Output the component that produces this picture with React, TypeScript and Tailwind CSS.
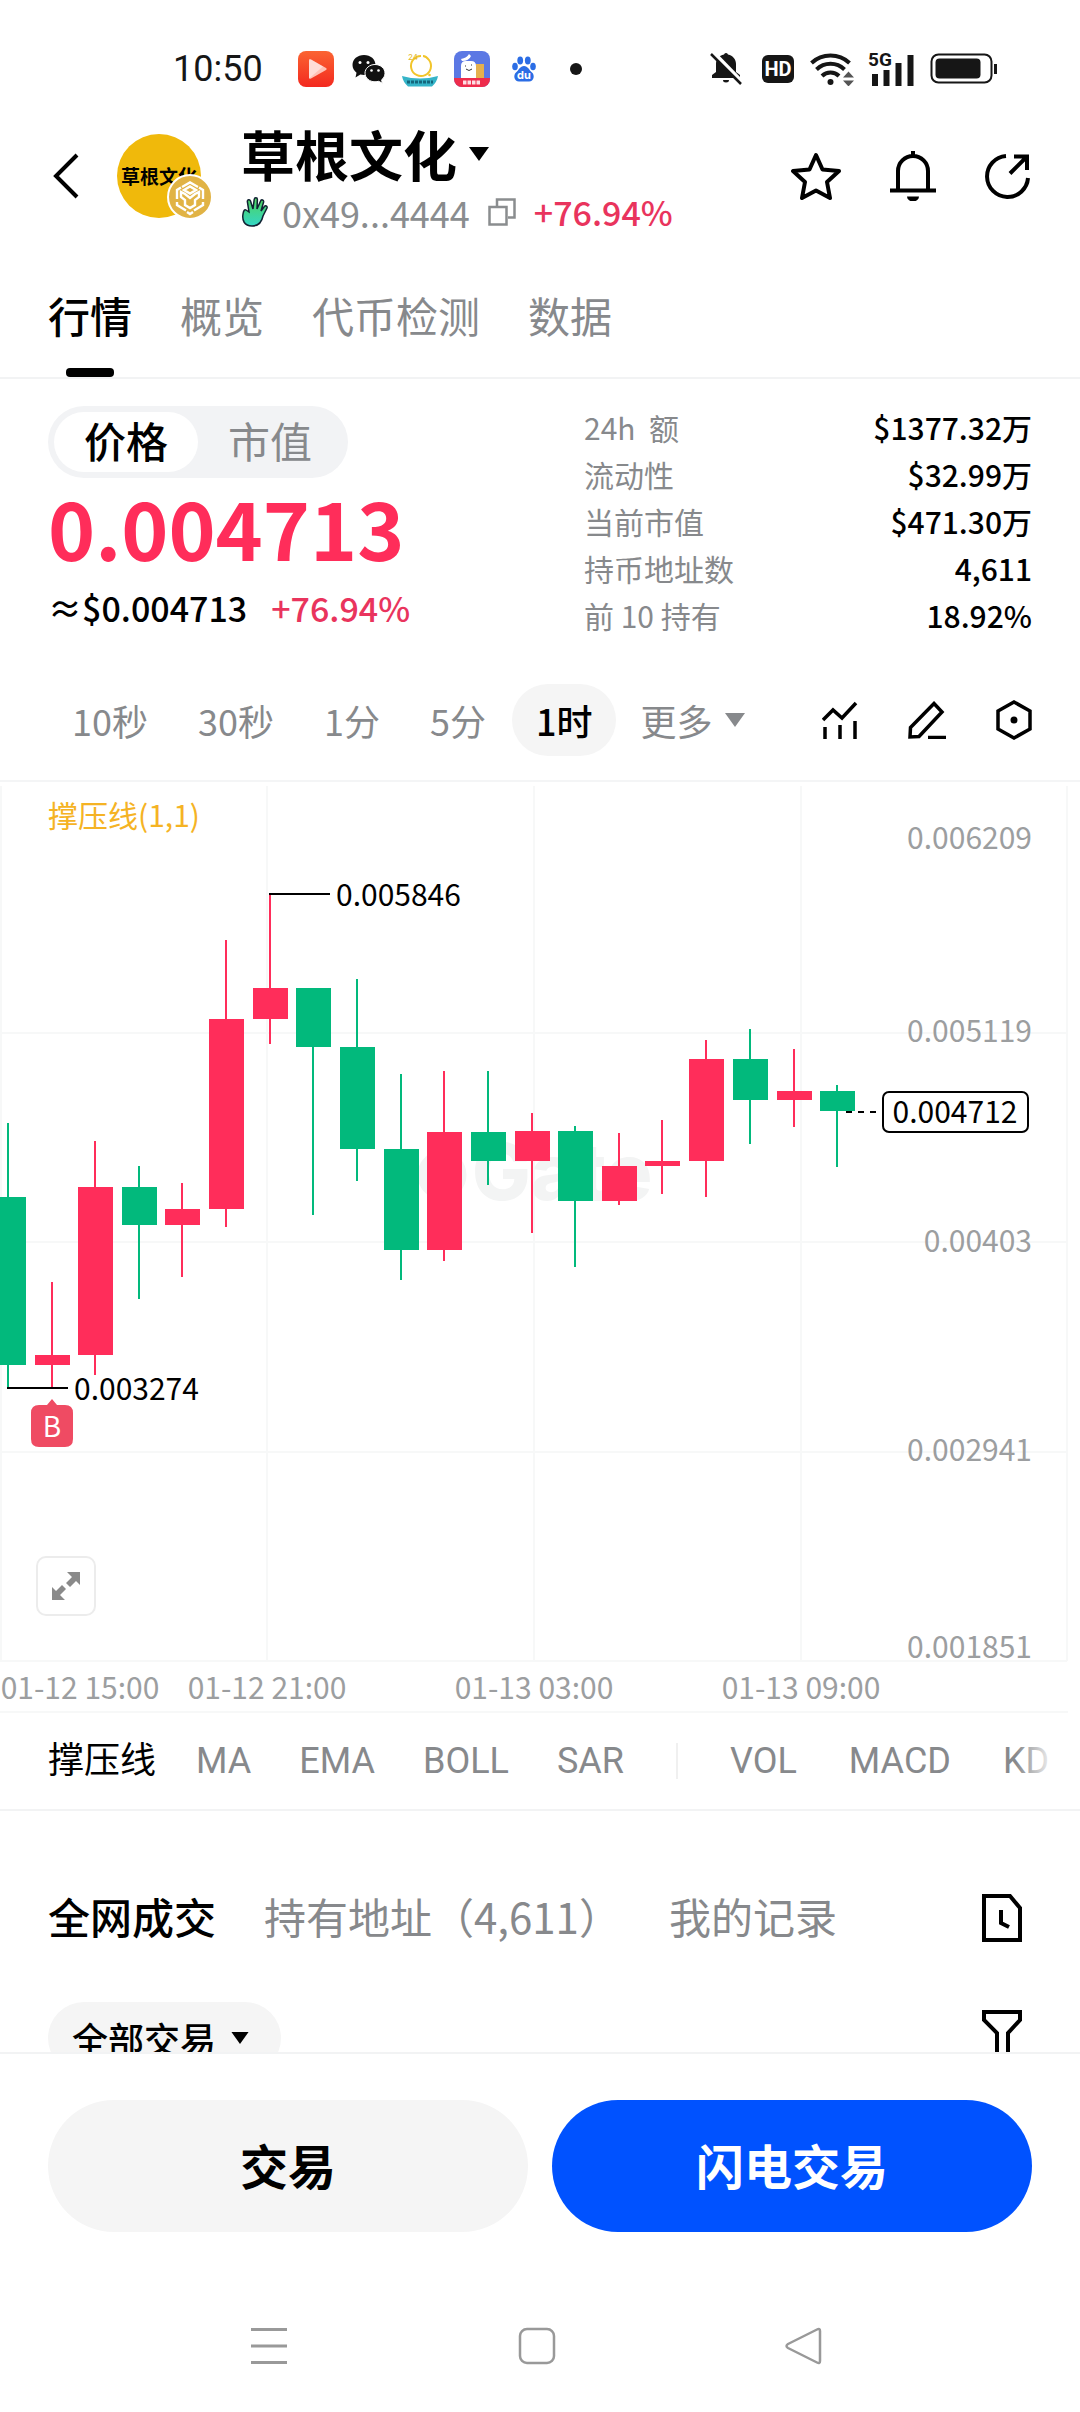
import type { ReactNode } from "react";

const UP = "#ff2d5a";
const DOWN = "#02b97c";

// x, high, low, body top, body bottom, colour
const candles: [number, number, number, number, number, string][] = [
  [8, 341, 605, 415, 583, DOWN],
  [52, 500, 605, 573, 583, UP],
  [95, 359, 593, 405, 573, UP],
  [139, 384, 517, 405, 443, DOWN],
  [182, 401, 495, 427, 443, UP],
  [226, 158, 445, 237, 427, UP],
  [270, 112, 262, 206, 237, UP],
  [313, 206, 433, 206, 265, DOWN],
  [357, 197, 399, 265, 367, DOWN],
  [401, 292, 498, 367, 468, DOWN],
  [444, 289, 479, 350, 468, UP],
  [488, 289, 403, 350, 379, DOWN],
  [532, 331, 451, 349, 379, UP],
  [575, 344, 485, 349, 419, DOWN],
  [619, 351, 423, 384, 419, UP],
  [662, 338, 412, 379, 384, UP],
  [706, 258, 415, 277, 379, UP],
  [750, 247, 362, 277, 318, DOWN],
  [794, 267, 345, 309, 318, UP],
  [837, 303, 385, 309, 329, DOWN],
];

const priceTicks = [
  { label: "0.006209", y: 56 },
  { label: "0.005119", y: 249 },
  { label: "0.00403", y: 459 },
  { label: "0.002941", y: 668 },
  { label: "0.001851", y: 865 },
];

const timeTicks = [
  { label: "01-12 15:00", x: 80 },
  { label: "01-12 21:00", x: 267 },
  { label: "01-13 03:00", x: 534 },
  { label: "01-13 09:00", x: 801 },
];

const stats = [
  { label: "24h  额", value: "$1377.32万" },
  { label: "流动性", value: "$32.99万" },
  { label: "当前市值", value: "$471.30万" },
  { label: "持币地址数", value: "4,611" },
  { label: "前 10 持有", value: "18.92%" },
];

function Caret({ className }: { className: string }) {
  return (
    <svg viewBox="0 0 20 14" className={className} fill="currentColor" aria-hidden="true">
      <path d="M0 0h20L10 14z" />
    </svg>
  );
}

function IconButton({ label, children }: { label: string; children: ReactNode }) {
  return (
    <button type="button" aria-label={label} className="flex shrink-0 items-center justify-center">
      {children}
    </button>
  );
}

function StatusBar() {
  return (
    <div className="flex items-center justify-between pt-[45px] pl-[173px] pr-[82px] text-[#161616]">
      <div className="flex items-center">
        <span className="w-[125px] font-[Roboto] text-4xl leading-12">10:50</span>
        {/* Video app */}
        <svg viewBox="0 0 36 36" className="mr-[18px] size-9">
          <defs>
            <linearGradient id="video" x1="0" y1="0" x2="0" y2="1">
              <stop offset="0" stopColor="#fb6432" />
              <stop offset="1" stopColor="#f3291f" />
            </linearGradient>
          </defs>
          <rect width="36" height="36" rx="8" fill="url(#video)" />
          <path d="M11 9.500q0-2 2-1l15 8.500q1.600 1 0 2l-15 8.500q-2 1-2-1z" fill="#ffc2b6" />
          <path d="M11 9.500q0-2 2-1l12 7-14 12z" fill="#fff" opacity=".45" />
        </svg>
        {/* Chat app */}
        <svg viewBox="0 0 34 30" className="mr-4 h-[30px] w-[34px]">
          <path d="M12 1c6.600 0 11.500 4.300 11.500 10S18.600 21 12 21c-1.300 0-2.500-.2-3.600-.5L3.500 23.500l1-4.800C2 16.800.500 14 .500 11 .500 5.300 5.400 1 12 1z" fill="#111" />
          <path d="M23 10.500c5.600 0 10 3.900 10 8.700 0 2.700-1.300 5-3.400 6.600l.8 3.400-3.800-1.900c-1.100.3-2.300.5-3.600.5-5.600 0-10-3.800-10-8.600s4.400-8.700 10-8.700z" fill="#111" stroke="#fff" />
          <g fill="#fff">
            <circle cx="8" cy="8.500" r="1.500" />
            <circle cx="16" cy="8.500" r="1.500" />
            <circle cx="19.500" cy="16.500" r="1.300" />
            <circle cx="26.500" cy="16.500" r="1.300" />
          </g>
        </svg>
        {/* 24h service app */}
        <svg viewBox="0 0 36 36" className="mr-4 size-9 overflow-visible">
          <path d="M19 5A10 10 0 1 0 27 9Q24 5 21 5" fill="none" stroke="#f2c52b" strokeWidth="2" />
          <circle cx="27.500" cy="24" r="1.300" fill="#f2c52b" />
          <text x="6" y="9" fontSize="8" fill="#e5b92c" fontFamily="Inter">24</text>
          <path d="M0 25q18 5 36 0-1 6-6 10.500H6Q1 31 0 25z" fill="#35b4c8" />
          <path d="M5 31h26" stroke="#14667c" strokeWidth="3" strokeDasharray="3 1" />
        </svg>
        {/* Mascot app */}
        <svg viewBox="0 0 36 36" className="mr-[22px] size-9">
          <defs>
            <clipPath id="mascot">
              <rect width="36" height="36" rx="8" />
            </clipPath>
          </defs>
          <g clipPath="url(#mascot)">
            <rect width="36" height="36" fill="#5b78e4" />
            <path d="M7 27V15q0-5 5-5h5q5 0 5 5v12z" fill="#fff" />
            <path d="M7 8q6-1 8-5l2 2q-2 5-9 5z" fill="#fff" />
            <rect x="22" y="13" width="8" height="14" fill="#e5b04e" />
            <path d="M12 18q3 3 6 0M11 15h1M17 14h1" stroke="#333" fill="none" />
            <rect y="27" width="36" height="9" fill="#ee2c4c" />
            <path d="M9 31.500h18" stroke="#fff" strokeWidth="4" strokeDasharray="3.500 1" opacity=".85" />
          </g>
        </svg>
        {/* Search app */}
        <svg viewBox="0 0 24 26" className="mr-[34px] h-[26px] w-6">
          <g fill="#2b6de5">
            <ellipse cx="3" cy="10.500" rx="2.800" ry="3.800" />
            <ellipse cx="8.200" cy="4.500" rx="2.900" ry="4" />
            <ellipse cx="15.800" cy="4.500" rx="2.900" ry="4" />
            <ellipse cx="21" cy="10.500" rx="2.800" ry="3.800" />
            <path d="M12 10c4 0 5 4 8 6.500 3 2.500 2 9-3 9H7c-5 0-6-6.500-3-9C7 14 8 10 12 10z" />
          </g>
          <text x="12" y="23" fontSize="11" fontWeight="700" fill="#fff" textAnchor="middle" fontFamily="Inter">du</text>
        </svg>
        <span className="size-3 rounded-full bg-[#161616]" />
      </div>

      <div className="flex items-center">
        <svg viewBox="0 0 32 34" className="mr-5 h-[34px] w-8" fill="currentColor">
          <path d="M16 1a2 2 0 0 1 2 1.500c5 1 8 5 8 9.500v8l4 3v3H2v-3l4-3v-8c0-4.500 3-8.500 8-9.500A2 2 0 0 1 16 1zM13 28h6a3 2.500 0 0 1-6 0z" />
          <path d="M3 0l30 31" stroke="#fff" strokeWidth="4" />
          <path d="M1 2l30 30" stroke="currentColor" strokeWidth="2.500" />
        </svg>
        <span className="mr-4 flex h-7 w-8 items-center justify-center rounded-md bg-[#161616] font-[Roboto] text-xl font-bold text-white">
          HD
        </span>
        <svg viewBox="0 0 44 34" className="h-[34px] w-11" fill="none" stroke="currentColor" strokeWidth="4">
          <path d="M1.500 11a28 28 0 0 1 38 0M6.500 17.500a20 20 0 0 1 28 0M12 24a12 12 0 0 1 17 0" />
          <circle cx="20.500" cy="30" r="3" fill="currentColor" stroke="none" />
          <path d="M33 25.500l5.500-6 5.500 6zM33 28.500l5.500 6 5.500-6z" fill="#555" stroke="none" />
        </svg>
        <svg viewBox="0 0 46 34" className="mr-4 ml-3.5 h-[34px] w-[46px] overflow-visible" fill="currentColor">
          <text x="0" y="14" fontSize="19" fontWeight="700" fontFamily="Roboto">5G</text>
          <path d="M4 22h6v12H4zM15.500 18h6v16h-6zM27.500 11h6v23h-6zM39.500 3h6v31h-6z" />
        </svg>
        <svg viewBox="0 0 68 32" className="h-8 w-[68px]">
          <rect x="1.500" y="1.500" width="60" height="28" rx="7" fill="none" stroke="currentColor" strokeWidth="2" />
          <rect x="5.500" y="5.500" width="45" height="20" rx="4" fill="currentColor" />
          <path d="M65.500 11v10" stroke="currentColor" strokeWidth="3" />
        </svg>
      </div>
    </div>
  );
}

function Header() {
  return (
    <header className="flex items-center pt-[27px] pl-[53px] pr-[49px]">
      <IconButton label="返回">
        <svg viewBox="0 0 26 46" className="h-[46px] w-[26px]" fill="none" stroke="currentColor" strokeWidth="4">
          <path d="M24 2L3 23l21 21" />
        </svg>
      </IconButton>

      {/* Token avatar with chain badge */}
      <div className="relative ml-[38px] flex size-[84px] shrink-0 items-center justify-center rounded-full bg-[#f0b90b]">
        <span className="text-[19px] font-bold whitespace-nowrap">草根文化</span>
        <svg viewBox="0 0 46 46" className="absolute -right-[12px] -bottom-[2px] size-[46px]">
          <circle cx="23" cy="23" r="22" fill="#e1b345" stroke="#fff" strokeWidth="2" />
          <g fill="none" stroke="#fff" strokeWidth="2.400">
            <path d="M15 13l8-4.500 8 4.500M10 25v-9l4-2.500M36 25v-9l-4-2.500M10 28v3l9 5.500M36 28v3l-9 5.500" />
            <path d="M17 16l6-3.500 6 3.500-6 3.500zM14 18v5l4 3v5l5 3 5-3v-5l4-3v-5l-4 2-5 4-5-4z" />
            <path d="M20 38l3 2 3-2" />
          </g>
        </svg>
      </div>

      <div className="ml-10 min-w-0 flex-1">
        <button type="button" className="mb-1 flex items-center gap-3 text-[54px] leading-[68px] font-bold">
          草根文化
          <Caret className="h-3.5 w-5" />
        </button>
        <div className="flex items-center text-4xl leading-10">
          <svg viewBox="0 0 27 30" className="mr-3.5 h-[30px] w-[27px] shrink-0">
            <defs>
              <linearGradient id="hand" x1="0" y1="0" x2="0" y2="1">
                <stop offset="0" stopColor="#4fd45c" />
                <stop offset="1" stopColor="#33d6c6" />
              </linearGradient>
            </defs>
            <path
              d="M2 17c-1 6 1 12 9 12 7 0 10-5 11-10l4-8c.6-2-1.600-3-2.800-1.200L20 14l2.600-9c.4-2.200-2.400-3-3-1L16 12l.4-9.500c0-2.200-3-2.200-3.200 0L12 12 9.500 4C8.800 2 6 2.600 6.400 4.800L8 15l-3-2c-1.500-1-2.500 1-3 4z"
              fill="url(#hand)"
              stroke="#123"
              strokeWidth="1.500"
            />
          </svg>
          <span className="text-[#8a8d8f]">0x49...4444</span>
          <button type="button" aria-label="复制地址" className="mx-[18px] text-[#8a8d8f]">
            <svg viewBox="0 0 28 28" className="size-7" fill="none" stroke="currentColor" strokeWidth="2.500">
              <path d="M1.500 9h17v17.500h-17zM9 8V1.500h17.500v18H20" />
            </svg>
          </button>
          <span className="text-[34px] font-medium text-[#e9345d]">+76.94%</span>
        </div>
      </div>

      <div className="flex items-center gap-[49px]">
        <IconButton label="收藏">
          <svg viewBox="0 0 50 48" className="h-12 w-[50px]" fill="none" stroke="currentColor" strokeWidth="4" strokeLinejoin="round">
            <path d="M25 3l6.500 14.500L48 19 36 30l3 16-14-7.500L11 46l3-16L2 19l16.500-1.500z" />
          </svg>
        </IconButton>
        <IconButton label="提醒">
          <svg viewBox="0 0 46 50" className="h-[50px] w-[46px]" fill="none" stroke="currentColor" strokeWidth="4">
            <path d="M0 39.500h46M8 39V20a15 15 0 0 1 30 0v19M23 0v6" />
            <path d="M17 45.500h12a6 5 0 0 1-12 0z" fill="currentColor" stroke="none" />
          </svg>
        </IconButton>
        <IconButton label="分享">
          <svg viewBox="0 0 46 46" className="size-[46px]" fill="none" stroke="currentColor" strokeWidth="4">
            <path d="M21 3A20.500 20.500 0 1 0 43 25" />
            <path d="M25 20.500L41.500 4M29 3.500h13V17" />
          </svg>
        </IconButton>
      </div>
    </header>
  );
}

function PageTabs() {
  const tabs = ["行情", "概览", "代币检测", "数据"];
  return (
    <nav className="flex gap-12 border-b-2 border-[#f2f3f4] px-12 pt-[59px]">
      {tabs.map((tab, i) => (
        <button key={tab} type="button" className="flex flex-col items-center text-[42px] leading-12">
          <span className={i === 0 ? "font-medium" : "text-[#87898c]"}>{tab}</span>
          {i === 0 && <span className="mt-[29px] h-[9px] w-12 rounded-sm bg-black" />}
        </button>
      ))}
    </nav>
  );
}

function Summary() {
  return (
    <section className="flex justify-between px-12 pt-[25px]">
      <div className="pt-0.5">
        <div className="flex w-[300px] rounded-full bg-[#f2f3f5] p-1.5 text-[42px] leading-[56px]">
          <button type="button" className="flex-1 rounded-full bg-white pb-1 font-medium">价格</button>
          <button type="button" className="flex-1 rounded-full pb-1 text-[#87898c]">市值</button>
        </div>
        <p className="mt-2 text-[80px] leading-20 font-bold text-[#ff2d5a]">0.004713</p>
        <p className="mt-5 flex gap-6 text-[34px] leading-11 font-medium">
          <span>≈$0.004713</span>
          <span className="text-[#e9345d]">+76.94%</span>
        </p>
      </div>
      <dl className="w-[448px] text-3xl leading-[47px]">
        {stats.map((s) => (
          <div key={s.label} className="flex justify-between">
            <dt className="whitespace-pre text-[#87898c]">{s.label}</dt>
            <dd className="font-medium">{s.value}</dd>
          </div>
        ))}
      </dl>
    </section>
  );
}

function Intervals() {
  const items = ["10秒", "30秒", "1分", "5分", "1时"];
  return (
    <section className="mt-[45px] flex items-center border-b-2 border-[#f4f5f6] px-12 pb-6 text-4xl leading-[72px] text-[#87898c]">
      <div className="flex gap-0.5">
        {items.map((item) => (
          <button
            key={item}
            type="button"
            className={item === "1时" ? "rounded-full bg-[#f5f5f5] px-6 font-medium text-black" : "px-6"}
          >
            {item}
          </button>
        ))}
      </div>
      <label className="relative ml-6 flex items-center">
        <select aria-label="更多周期" className="h-[72px] w-[105px] appearance-none bg-transparent">
          <option>更多</option>
        </select>
        <Caret className="pointer-events-none absolute right-0 h-3.5 w-5" />
      </label>
      <div className="ml-auto flex items-center gap-[49px] text-black">
        <IconButton label="指标">
          <svg viewBox="0 0 36 38" className="h-[38px] w-9" fill="none" stroke="currentColor" strokeWidth="3.500">
            <path d="M1 19l10-10 9 8L34 2M3 26v12M18 24v14M33 20v18" />
          </svg>
        </IconButton>
        <IconButton label="画线">
          <svg viewBox="0 0 40 38" className="h-[38px] w-10" fill="none" stroke="currentColor" strokeWidth="3.500">
            <path d="M27 2.500l8 8.500-23 24.500-9 .5.500-9.500zM21 36.500h18" />
          </svg>
        </IconButton>
        <IconButton label="设置">
          <svg viewBox="0 0 36 40" className="h-10 w-9" fill="none" stroke="currentColor" strokeWidth="3.500">
            <path d="M18 2l16 9v18l-16 9-16-9V11z" />
            <circle cx="18" cy="20" r="3.500" fill="currentColor" stroke="none" />
          </svg>
        </IconButton>
      </div>
    </section>
  );
}

function Chart() {
  return (
    <section className="relative">
      <svg viewBox="0 0 1080 931" className="block w-full" fontSize="30" aria-label="K线图">
        {/* Grid */}
        <g stroke="#f7f8f8" strokeWidth="2">
          {[1, 267, 534, 801, 1067].map((x) => (
            <path key={x} d={`M${x} 4V879`} />
          ))}
          {[251, 460, 670, 879].map((y) => (
            <path key={y} d={`M0 ${y}H1067`} />
          ))}
          <path d="M0 930H1068" />
        </g>

        {/* Watermark */}
        <g fill="#f3f4f4">
          <circle cx="442" cy="393" r="18" fill="none" stroke="#f3f4f4" strokeWidth="13" />
          <text x="472" y="418" fontSize="78" fontWeight="800" fontFamily="Inter">Gate</text>
        </g>

        {candles.map(([x, high, low, top, bottom, color]) => (
          <g key={x} fill={color}>
            <rect x={x - 1} y={high} width="2" height={low - high} />
            <rect x={x - 17} y={top} width="35" height={bottom - top} />
          </g>
        ))}

        {/* High and low markers */}
        <path d="M269 112H330M7 606H68" stroke="#000" strokeWidth="2" />
        <text x="336" y="124">0.005846</text>
        <text x="74" y="618">0.003274</text>

        {/* Buy marker */}
        <path d="M52 617l5 6h8q8 0 8 8v26q0 8-8 8H39q-8 0-8-8v-26q0-8 8-8h8z" fill="#ef4b63" />
        <text x="52" y="655" fontSize="28" fill="#fff" textAnchor="middle">B</text>

        {/* Last price */}
        <path d="M846 330H882" stroke="#000" strokeWidth="2" strokeDasharray="6 6" />
        <rect x="883" y="310" width="145" height="40" rx="6" fill="#fff" stroke="#000" strokeWidth="2" />
        <text x="955" y="341" textAnchor="middle">0.004712</text>

        <text x="48" y="45" fill="#f5b324">撑压线(1,1)</text>
        <g fill="#9c9ea0">
          {priceTicks.map((t) => (
            <text key={t.label} x="1032" y={t.y + 11} textAnchor="end">{t.label}</text>
          ))}
          {timeTicks.map((t) => (
            <text key={t.label} x={t.x} y="917" textAnchor="middle">{t.label}</text>
          ))}
        </g>
      </svg>
      <button
        type="button"
        aria-label="全屏"
        className="absolute bottom-[97px] left-9 flex size-15 items-center justify-center rounded-[10px] border-2 border-[#ececec] bg-white text-[#8a8a8a]"
      >
        <svg viewBox="0 0 28 28" className="size-7" fill="currentColor">
          <path d="M15 0h13v13l-4-4-6 6-4-4 6-6zM13 28H0V15l4 4 6-6 4 4-6 6z" />
        </svg>
      </button>
    </section>
  );
}

function Indicators() {
  const main = ["MA", "EMA", "BOLL", "SAR"];
  const sub = ["VOL", "MACD", "KD"];
  return (
    <section className="relative flex items-center overflow-hidden border-b-2 border-[#f2f3f4] px-12 py-6 font-[Roboto,'Noto_Sans_CJK_SC',sans-serif] text-4xl leading-12 text-[#87898c]">
      <button type="button" className="shrink-0 text-black">撑压线</button>
      <div className="ml-10 flex shrink-0 gap-12">
        {main.map((name) => (
          <button key={name} type="button">{name}</button>
        ))}
      </div>
      <span className="mx-[52px] h-9 w-0.5 shrink-0 bg-[#f0f0f0]" />
      <div className="flex shrink-0 gap-[52px]">
        {sub.map((name) => (
          <button key={name} type="button">{name}</button>
        ))}
      </div>
      <span className="absolute inset-y-0 right-6 w-10 bg-gradient-to-r from-white/0 to-white" />
    </section>
  );
}

function Trades() {
  return (
    <section className="px-12 pt-[81px]">
      <div className="flex items-center gap-12 text-[42px] leading-12 text-[#87898c]">
        <button type="button" className="pb-1 font-medium text-black">全网成交</button>
        <button type="button" className="pb-1">持有地址（4,611）</button>
        <button type="button" className="pb-1">我的记录</button>
        <div className="mr-2.5 ml-auto flex text-black">
          <IconButton label="历史记录">
            <svg viewBox="0 0 40 48" className="h-12 w-10" fill="none" stroke="currentColor" strokeWidth="4">
              <path d="M2 2h26l10 12v32H2z" />
              <path d="M19 16v13l8 4" />
            </svg>
          </IconButton>
        </div>
      </div>
      <div className="mt-[58px] flex items-start justify-between">
        <label className="relative flex items-center">
          <select
            aria-label="交易类型"
            className="h-[72px] w-[233px] appearance-none rounded-full bg-[#f5f5f5] pl-6 text-4xl font-medium"
          >
            <option>全部交易</option>
          </select>
          <Caret className="pointer-events-none absolute right-8 h-3 w-[18px]" />
        </label>
        <div className="mt-2 mr-2.5 flex">
          <IconButton label="筛选">
            <svg viewBox="0 0 40 46" className="h-[46px] w-10" fill="none" stroke="currentColor" strokeWidth="4">
              <path d="M2 2h36v8L26 23v21H15V23L2 10z" />
            </svg>
          </IconButton>
        </div>
      </div>
    </section>
  );
}

function SystemNav() {
  return (
    <div className="flex items-center justify-between pt-[94px] pr-[257px] pb-[46px] pl-[250px] text-[#999]">
      <IconButton label="最近任务">
        <svg viewBox="0 0 38 40" className="h-10 w-[38px]" fill="none" stroke="currentColor" strokeWidth="3">
          <path d="M1 3.500h36M1 20h36M1 36.500h36" />
        </svg>
      </IconButton>
      <IconButton label="主屏幕">
        <svg viewBox="0 0 38 40" className="h-10 w-[38px]" fill="none" stroke="currentColor" strokeWidth="2.500">
          <rect x="2" y="3" width="34" height="34" rx="7" />
        </svg>
      </IconButton>
      <IconButton label="后退">
        <svg viewBox="0 0 38 40" className="h-10 w-[38px]" fill="none" stroke="currentColor" strokeWidth="2.500" strokeLinejoin="round">
          <path d="M3 18L32 3.500q3-1.500 3 1.500v30q0 3-3 1.500L3 22q-3-2 0-4z" />
        </svg>
      </IconButton>
    </div>
  );
}

export default function App() {
  return (
    <div className="flex h-screen flex-col overflow-hidden bg-white font-['Noto_Sans_CJK_SC',sans-serif] text-black">
      <main className="min-h-0 flex-1 overflow-hidden">
        <StatusBar />
        <Header />
        <PageTabs />
        <Summary />
        <Intervals />
        <Chart />
        <Indicators />
        <Trades />
      </main>
      <footer className="border-t-2 border-[#f2f3f4] bg-white">
        <div className="flex gap-6 px-12 pt-[46px] text-5xl font-bold">
          <button type="button" className="h-[132px] flex-1 rounded-full bg-[#f5f5f5] pb-1">交易</button>
          <button type="button" className="h-[132px] flex-1 rounded-full bg-[#0052ff] pb-1 text-white">闪电交易</button>
        </div>
        <SystemNav />
      </footer>
    </div>
  );
}
